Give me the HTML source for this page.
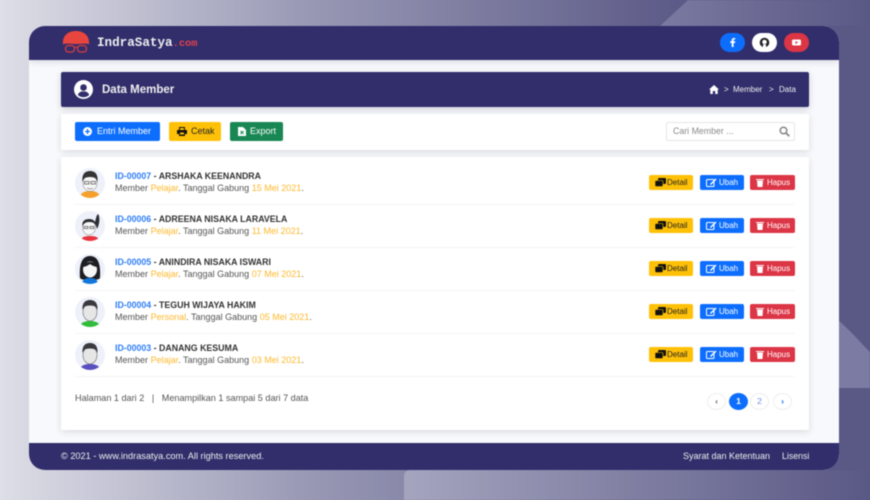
<!DOCTYPE html>
<html><head><meta charset="utf-8"><style>
*{box-sizing:border-box;margin:0;padding:0}
html,body{width:870px;height:500px;overflow:hidden}
body{position:relative;font-family:"Liberation Sans",sans-serif;background:linear-gradient(90deg,#dedee7 0,#9a9ab6 300px,#5a5885 690px)}
.abs{position:absolute}
#wrap{position:absolute;left:0;top:0;width:870px;height:500px;filter:blur(.5px)}
.app{left:29px;top:26px;width:810px;height:444px;background:#f8f9fc;border-radius:16px;overflow:hidden}
.top{left:0;top:0;width:810px;height:34px;background:#312e6b;box-shadow:0 2px 6px rgba(40,40,60,.15)}
.bot{left:0;top:417px;width:810px;height:27px;background:#312e6b;color:#eee;font-size:9.2px;line-height:27px}
.card{background:#fff;box-shadow:0 2px 7px rgba(40,40,60,.14);border-radius:2px}
.btn{position:absolute;height:19px;border-radius:2px;font-size:9px;line-height:19px;white-space:nowrap}
.btn svg{position:absolute}
.sm{height:15px;line-height:15px;font-size:8px;border-radius:2px;position:absolute;white-space:nowrap}
.sm svg{position:absolute;left:6px;top:3px}
.y{background:#ffc107;color:#222}.b{background:#0d6efd;color:#fff}.r{background:#dc3545;color:#fff}.g{background:#198754;color:#fff}
.l1{position:absolute;left:54px;font-size:8.8px;font-weight:bold;color:#333;white-space:nowrap;line-height:10px}
.l1 i{font-style:normal;color:#2f7ff5}
.l2{position:absolute;left:54px;font-size:9.03px;color:#555;white-space:nowrap;line-height:10px}
.l2 i{font-style:normal;color:#fdb92e}
.hr{position:absolute;left:14px;width:720px;height:1px;background:#f4f4f6}
.av{position:absolute;left:14px;width:30px;height:30px;border-radius:50%;background:#eef1fa;overflow:hidden}
.pg{position:absolute;top:236px;width:19px;height:17px;border-radius:50%;background:#fff;border:1px solid #eee;font-size:8.6px;line-height:15px;text-align:center;color:#6c8fe8}
.soc{position:absolute;top:7px;width:25px;height:19px;border-radius:10px;text-align:center}
</style></head><body>
<div id="wrap">
<svg class="abs" style="left:0;top:0" width="870" height="500">
<defs>
<linearGradient id="a" x1="0" x2="1" y1="0" y2="0"><stop offset="0" stop-color="#7b7aa1"/><stop offset="1" stop-color="#5a5885"/></linearGradient>
<linearGradient id="c" x1="0" x2="1" y1="0" y2="0"><stop offset="0" stop-color="#a5a5bf"/><stop offset="1" stop-color="#5a5885"/></linearGradient>
</defs>
<polygon points="660,26 688,0 870,0 870,26" fill="url(#a)"/>
<path d="M838 320 C850 330 860 342 870 352 L870 388 L838 388Z" fill="#7c7ba3"/>
<path d="M404 500 V476 Q404 470 412 470 H870 V500Z" fill="url(#c)"/>
</svg>
<div class="abs app">
 <div class="abs top">
  <svg class="abs" style="left:33px;top:4px" width="28" height="24" viewBox="0 0 28 24">
   <path d="M1 14.500 C0 5 7 1 14 1 C21 1 28 5 27 14.500 C24 13 22 14 14 14 C6 14 4 13 1 14.500Z" fill="#e9453f"/>
   <rect x="3.500" y="15.500" width="9" height="6.500" rx="3" fill="none" stroke="#c23a48" stroke-width="1.500"/>
   <rect x="15.500" y="15.500" width="9" height="6.500" rx="3" fill="none" stroke="#c23a48" stroke-width="1.500"/>
   <path d="M12.500 17h3" stroke="#c23a48" stroke-width="1.200"/>
  </svg>
  <div class="abs" style="left:68px;top:10px;font:bold 12.6px/14px 'Liberation Mono',monospace;color:#eee;white-space:nowrap">IndraSatya<span style="font-size:10.4px;color:#e0404e">.com</span></div>
  <div class="soc b" style="left:691px"><svg width="25" height="19" viewBox="0 0 25 19"><path d="M13.600 14V10h1.400l.3-1.700h-1.700V7.300c0-.6.3-.9.9-.9h.8V5h-1.300c-1.500 0-2.300.9-2.300 2.200v1.100H10.300V10h1.400v4z" fill="#fff"/></svg></div>
  <div class="soc" style="left:723px;background:#fff"><svg width="25" height="19" viewBox="0 0 25 19"><circle cx="12.500" cy="9.500" r="4.800" fill="#222"/><circle cx="12.500" cy="9" r="2.300" fill="#fff"/><rect x="11" y="11.500" width="3" height="3" fill="#fff"/></svg></div>
  <div class="soc r" style="left:755px"><svg width="25" height="19" viewBox="0 0 25 19"><rect x="8" y="6.500" width="9" height="6" rx="1.500" fill="#fff"/><path d="M11.500 8l2.500 1.500-2.500 1.500z" fill="#dc3545"/></svg></div>
 </div>
 <div class="abs" style="left:32px;top:46px;width:748px;height:35px;background:#312e6b;border-radius:2px;box-shadow:0 2px 7px rgba(40,40,60,.2)">
  <svg class="abs" style="left:13px;top:8px" width="19" height="19" viewBox="0 0 19 19"><circle cx="9.500" cy="9.500" r="9.500" fill="#fff"/><circle cx="9.500" cy="7.500" r="3.300" fill="#312e6b"/><path d="M3.800 15c1-2.800 3-3.600 5.700-3.600s4.700.8 5.700 3.600c-1.500 1.400-3.500 2.200-5.700 2.200s-4.200-.8-5.700-2.200z" fill="#312e6b"/></svg>
  <div class="abs" style="left:41px;top:11px;font-size:11.500px;line-height:14px;font-weight:bold;color:#eee;white-space:nowrap">Data Member</div>
  <svg class="abs" style="left:648px;top:13px" width="10" height="9" viewBox="0 0 10 9"><path d="M5 0L0 4.500h1.300V9h2.500V6h2.400v3h2.500V4.500H10z" fill="#fff"/></svg>
  <div class="abs" style="left:663px;top:12px;font-size:8px;line-height:11px;color:#eee">&gt;</div>
  <div class="abs" style="left:672px;top:12px;font-size:8px;line-height:11px;color:#eee">Member</div>
  <div class="abs" style="left:708px;top:12px;font-size:8px;line-height:11px;color:#eee">&gt;</div>
  <div class="abs" style="left:718px;top:12px;font-size:8px;line-height:11px;color:#eee">Data</div>
 </div>
 <div class="abs card" style="left:32px;top:88px;width:748px;height:36px">
  <div class="btn b" style="left:14px;top:8px;width:85px;padding-left:22px"><svg style="left:8px;top:5px" width="9" height="9"><circle cx="4.500" cy="4.500" r="4.500" fill="#fff"/><path d="M2 4.500h5M4.500 2v5" stroke="#0d6efd" stroke-width="1.300"/></svg>Entri Member</div>
  <div class="btn y" style="left:108px;top:8px;width:52px;padding-left:22px"><svg style="left:8px;top:5px" width="10" height="9"><path d="M2 0h6v3h2v4H8v2H2V7H0V3h2z" fill="#111"/><rect x="3" y="5.500" width="4" height="2" fill="#ffc107"/><rect x="3" y="1" width="4" height="2" fill="#ffc107"/></svg>Cetak</div>
  <div class="btn g" style="left:169px;top:8px;width:53px;padding-left:20px"><svg style="left:8px;top:5px" width="8" height="9"><path d="M0 0h5l3 3v6H0z" fill="#fff"/><path d="M2.500 4l3 3M5.500 4l-3 3" stroke="#198754"/></svg>Export</div>
  <div class="abs" style="left:605px;top:8px;width:129px;height:19px;border:1px solid #e6e6ea;border-radius:2px;background:#fff;font-size:8.800px;line-height:17px;color:#8a8a8a;padding-left:6px">Cari Member ...
   <svg class="abs" style="left:112px;top:3px" width="11" height="11"><circle cx="4.500" cy="4.500" r="3.300" fill="none" stroke="#888" stroke-width="1.500"/><path d="M7 7l3.300 3.300" stroke="#888" stroke-width="1.800"/></svg></div>
 </div>
 <div class="abs card" style="left:32px;top:131px;width:748px;height:273px">
  <div class="av" style="top:11px"><svg width="30" height="30" viewBox="0 0 30 30"><path d="M5 30c0-5 4-7 10-7s10 2 10 7z" fill="#f5a02c"/><ellipse cx="15" cy="15" rx="7" ry="8.500" fill="#f7f7f7" stroke="#777" stroke-width=".5"/><path d="M7.500 14C6.500 5 11 3 15 3s8.500 2 7.500 11c-1-3-2-5-7.500-5s-6.500 2-7.500 5z" fill="#333"/><path d="M9.500 13.500h4.500v2.500H9.500zM16 13.500h4.500v2.500H16z" fill="none" stroke="#555" stroke-width=".7"/><path d="M12 20c2 1.200 4 1.200 6 0" stroke="#777" fill="none" stroke-width=".7"/></svg></div>
  <div class="l1" style="top:14px"><i>ID-00007</i> - ARSHAKA KEENANDRA</div>
  <div class="l2" style="top:26px">Member <i>Pelajar</i>. Tanggal Gabung <i>15 Mei 2021</i>.</div>
  <div class="hr" style="top:47px"></div>
  <div class="sm y" style="left:588px;top:18px;width:44px;padding-left:18px"><svg width="11" height="9"><rect x="3" y="0" width="8" height="6" rx="1" fill="#111"/><rect x="0" y="2.500" width="8" height="6" rx="1" fill="#111" stroke="#ffc107" stroke-width=".6"/></svg>Detail</div>
  <div class="sm b" style="left:639px;top:18px;width:44px;padding-left:19px"><svg width="11" height="9"><rect x=".5" y="1.500" width="7.500" height="7" rx="1" fill="none" stroke="#fff"/><path d="M4 6l5.500-5.500 1 1L5 7z" fill="#fff"/></svg>Ubah</div>
  <div class="sm r" style="left:689px;top:18px;width:45px;padding-left:17px"><svg width="9" height="9"><path d="M0 1h8v1H0zM1 2.500h6L6.500 9h-5z" fill="#fff"/></svg>Hapus</div>

  <div class="av" style="top:54px"><svg width="30" height="30" viewBox="0 0 30 30"><path d="M6 30c0-4 4-5 9-5s9 1 9 5z" fill="#e8343f"/><ellipse cx="14" cy="16.500" rx="6.500" ry="7.500" fill="#f7f7f7" stroke="#777" stroke-width=".5"/><path d="M7.500 15.500C6.500 10 10 8 14 8c3 0 5 1 6 3 1-3 1-6 3-8 2 2 2 10-1 15-1-4-2-7-8-7-4 0-5.500 2-6.500 4.500z" fill="#2d2d33"/><path d="M9 15.500h4v2H9zM15 15.500h4v2h-4z" fill="none" stroke="#555" stroke-width=".7"/></svg></div>
  <div class="l1" style="top:57px"><i>ID-00006</i> - ADREENA NISAKA LARAVELA</div>
  <div class="l2" style="top:69px">Member <i>Pelajar</i>. Tanggal Gabung <i>11 Mei 2021</i>.</div>
  <div class="hr" style="top:90px"></div>
  <div class="sm y" style="left:588px;top:61px;width:44px;padding-left:18px"><svg width="11" height="9"><rect x="3" y="0" width="8" height="6" rx="1" fill="#111"/><rect x="0" y="2.500" width="8" height="6" rx="1" fill="#111" stroke="#ffc107" stroke-width=".6"/></svg>Detail</div>
  <div class="sm b" style="left:639px;top:61px;width:44px;padding-left:19px"><svg width="11" height="9"><rect x=".5" y="1.500" width="7.500" height="7" rx="1" fill="none" stroke="#fff"/><path d="M4 6l5.500-5.500 1 1L5 7z" fill="#fff"/></svg>Ubah</div>
  <div class="sm r" style="left:689px;top:61px;width:45px;padding-left:17px"><svg width="9" height="9"><path d="M0 1h8v1H0zM1 2.500h6L6.500 9h-5z" fill="#fff"/></svg>Hapus</div>

  <div class="av" style="top:97px"><svg width="30" height="30" viewBox="0 0 30 30"><path d="M5 24C4 10 7 2 15 2s11 8 10 22c-2 2-4 2-6 1H11c-2 1-4 1-6-1z" fill="#1d1d22"/><path d="M7 30c0-4 3-6 8-6s8 2 8 6z" fill="#1177dd"/><ellipse cx="15" cy="15.500" rx="7" ry="8" fill="#f6f6f6"/><path d="M8 13c1-4 4-5 7-5s6 1 7 5c-3-.5-5-1.500-7-3-2 1.500-4 2.500-7 3z" fill="#1d1d22"/></svg></div>
  <div class="l1" style="top:100px"><i>ID-00005</i> - ANINDIRA NISAKA ISWARI</div>
  <div class="l2" style="top:112px">Member <i>Pelajar</i>. Tanggal Gabung <i>07 Mei 2021</i>.</div>
  <div class="hr" style="top:133px"></div>
  <div class="sm y" style="left:588px;top:104px;width:44px;padding-left:18px"><svg width="11" height="9"><rect x="3" y="0" width="8" height="6" rx="1" fill="#111"/><rect x="0" y="2.500" width="8" height="6" rx="1" fill="#111" stroke="#ffc107" stroke-width=".6"/></svg>Detail</div>
  <div class="sm b" style="left:639px;top:104px;width:44px;padding-left:19px"><svg width="11" height="9"><rect x=".5" y="1.500" width="7.500" height="7" rx="1" fill="none" stroke="#fff"/><path d="M4 6l5.500-5.500 1 1L5 7z" fill="#fff"/></svg>Ubah</div>
  <div class="sm r" style="left:689px;top:104px;width:45px;padding-left:17px"><svg width="9" height="9"><path d="M0 1h8v1H0zM1 2.500h6L6.500 9h-5z" fill="#fff"/></svg>Hapus</div>

  <div class="av" style="top:140px"><svg width="30" height="30" viewBox="0 0 30 30"><path d="M5 30c0-4 4-6 10-6s10 2 10 6z" fill="#2fbd3a"/><ellipse cx="15" cy="15" rx="7" ry="9" fill="#e6e6e6" stroke="#666" stroke-width=".6"/><path d="M7.500 13C7 5 11 3 15 3s8 2 7.500 10c-1-3-3-4.500-7.500-4.500S8.500 10 7.500 13z" fill="#39393f"/></svg></div>
  <div class="l1" style="top:143px"><i>ID-00004</i> - TEGUH WIJAYA HAKIM</div>
  <div class="l2" style="top:155px">Member <i>Personal</i>. Tanggal Gabung <i>05 Mei 2021</i>.</div>
  <div class="hr" style="top:176px"></div>
  <div class="sm y" style="left:588px;top:147px;width:44px;padding-left:18px"><svg width="11" height="9"><rect x="3" y="0" width="8" height="6" rx="1" fill="#111"/><rect x="0" y="2.500" width="8" height="6" rx="1" fill="#111" stroke="#ffc107" stroke-width=".6"/></svg>Detail</div>
  <div class="sm b" style="left:639px;top:147px;width:44px;padding-left:19px"><svg width="11" height="9"><rect x=".5" y="1.500" width="7.500" height="7" rx="1" fill="none" stroke="#fff"/><path d="M4 6l5.500-5.500 1 1L5 7z" fill="#fff"/></svg>Ubah</div>
  <div class="sm r" style="left:689px;top:147px;width:45px;padding-left:17px"><svg width="9" height="9"><path d="M0 1h8v1H0zM1 2.500h6L6.500 9h-5z" fill="#fff"/></svg>Hapus</div>

  <div class="av" style="top:183px"><svg width="30" height="30" viewBox="0 0 30 30"><path d="M5 30c0-4 4-6 10-6s10 2 10 6z" fill="#5a4fc0"/><ellipse cx="15" cy="15" rx="7" ry="9" fill="#e6e6e6" stroke="#666" stroke-width=".6"/><path d="M7.500 13C7 5 11 3 15 3s8 2 7.500 10c-1-3-3-4.500-7.500-4.500S8.500 10 7.500 13z" fill="#39393f"/></svg></div>
  <div class="l1" style="top:186px"><i>ID-00003</i> - DANANG KESUMA</div>
  <div class="l2" style="top:198px">Member <i>Pelajar</i>. Tanggal Gabung <i>03 Mei 2021</i>.</div>
  <div class="hr" style="top:219px"></div>
  <div class="sm y" style="left:588px;top:190px;width:44px;padding-left:18px"><svg width="11" height="9"><rect x="3" y="0" width="8" height="6" rx="1" fill="#111"/><rect x="0" y="2.500" width="8" height="6" rx="1" fill="#111" stroke="#ffc107" stroke-width=".6"/></svg>Detail</div>
  <div class="sm b" style="left:639px;top:190px;width:44px;padding-left:19px"><svg width="11" height="9"><rect x=".5" y="1.500" width="7.500" height="7" rx="1" fill="none" stroke="#fff"/><path d="M4 6l5.500-5.500 1 1L5 7z" fill="#fff"/></svg>Ubah</div>
  <div class="sm r" style="left:689px;top:190px;width:45px;padding-left:17px"><svg width="9" height="9"><path d="M0 1h8v1H0zM1 2.500h6L6.500 9h-5z" fill="#fff"/></svg>Hapus</div>

  <div class="abs" style="left:14px;top:236px;font-size:9.1px;line-height:11px;color:#555;white-space:pre">Halaman 1 dari 2   |   Menampilkan 1 sampai 5 dari 7 data</div>
  <div class="pg" style="left:646px;color:#666;font-weight:bold">&#8249;</div>
  <div class="pg" style="left:668px;background:#0d6efd;border-color:#0d6efd;color:#fff;font-weight:bold">1</div>
  <div class="pg" style="left:689px">2</div>
  <div class="pg" style="left:712px;color:#0d6efd;font-weight:bold">&#8250;</div>
 </div>
 <div class="abs bot">
  <div class="abs" style="left:32px;top:0;white-space:nowrap">© 2021 - www.indrasatya.com. All rights reserved.</div>
  <div class="abs" style="left:654px;top:0;white-space:nowrap;font-size:9px">Syarat dan Ketentuan</div>
  <div class="abs" style="left:753px;top:0;white-space:nowrap;font-size:8.800px">Lisensi</div>
 </div>
</div>
</div>
</body></html>
